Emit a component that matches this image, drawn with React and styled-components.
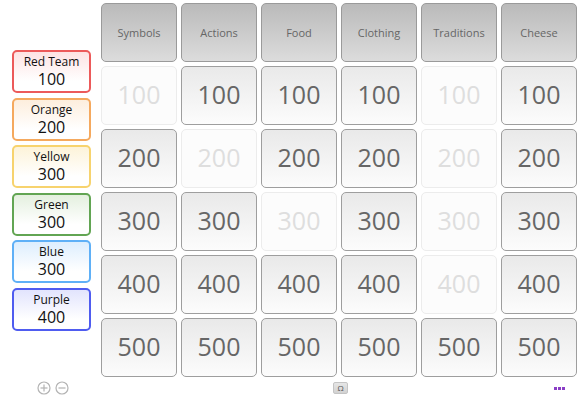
import React from 'react'
import styled, { createGlobalStyle } from 'styled-components'

const GlobalStyle = createGlobalStyle`
  html, body {
    margin: 0;
    padding: 0;
    background: #fff;
    font-family: 'Open Sans', 'DejaVu Sans', sans-serif;
  }
`

const teams = [
  { name: 'Red Team', score: 100, border: '#ec5a5a', tint: '#fde3e3' },
  { name: 'Orange', score: 200, border: '#f5a95e', tint: '#fdeedd' },
  { name: 'Yellow', score: 300, border: '#f7d36e', tint: '#fdf3d9' },
  { name: 'Green', score: 300, border: '#62a553', tint: '#e4f0df' },
  { name: 'Blue', score: 300, border: '#5fb0f7', tint: '#ddeefe' },
  { name: 'Purple', score: 400, border: '#4f5cf0', tint: '#e2e4fd' }
]

const categories = ['Symbols', 'Actions', 'Food', 'Clothing', 'Traditions', 'Cheese']

// used[row][col]
const used = [
  [true, false, false, false, true, false],
  [false, true, false, false, true, false],
  [false, false, true, false, true, false],
  [false, false, false, false, true, false],
  [false, false, false, false, false, false]
]

const App = () => {
  return (
    <>
      <GlobalStyle />
      <Page>
        <Main>
          <Sidebar>
            {teams.map(t => (
              <TeamBox key={t.name} border={t.border} tint={t.tint}>
                <TeamName>{t.name}</TeamName>
                <TeamScore>{t.score}</TeamScore>
              </TeamBox>
            ))}
          </Sidebar>
          <Board>
            {categories.map(c => (
              <Header key={c}>{c}</Header>
            ))}
            {used.map((row, r) =>
              row.map((u, c) => (
                <Cell key={r + '-' + c} used={u}>
                  {(r + 1) * 100}
                </Cell>
              ))
            )}
          </Board>
        </Main>
        <Footer>
          <Controls>
            <RoundIcon viewBox='0 0 14 14'>
              <circle cx='7' cy='7' r='6' />
              <line x1='7' y1='3.5' x2='7' y2='10.5' />
              <line x1='3.5' y1='7' x2='10.5' y2='7' />
            </RoundIcon>
            <RoundIcon viewBox='0 0 14 14'>
              <circle cx='7' cy='7' r='6' />
              <line x1='3.5' y1='7' x2='10.5' y2='7' />
            </RoundIcon>
          </Controls>
          <OmegaButton>Ω</OmegaButton>
          <Dots>
            <span />
            <span />
            <span />
          </Dots>
        </Footer>
      </Page>
    </>
  )
}

const Page = styled.div`
  width: 585px;
  height: 405px;
  display: flex;
  flex-direction: column;
`
const Main = styled.div`
  display: flex;
  padding-top: 3px;
`
const Sidebar = styled.div`
  width: 79px;
  padding: 47px 10px 0 12px;
  display: flex;
  flex-direction: column;
  gap: 4.5px;
`
const TeamBox = styled.div`
  box-sizing: border-box;
  height: 43px;
  border: 2px solid ${p => p.border};
  border-radius: 5px;
  background: linear-gradient(to bottom, ${p => p.tint}, #ffffff 75%);
  display: flex;
  flex-direction: column;
  align-items: center;
  justify-content: center;
  color: #111;
`
const TeamName = styled.div`
  font-size: 12px;
  line-height: 16px;
`
const TeamScore = styled.div`
  font-size: 16px;
  line-height: 19px;
`
const Board = styled.div`
  display: grid;
  grid-template-columns: repeat(6, 76px);
  grid-auto-rows: 59px;
  gap: 4px;
`
const Header = styled.div`
  box-sizing: border-box;
  border: 1.5px solid #9a9a9a;
  border-radius: 5px;
  background: linear-gradient(to bottom, #bababa, #dcdcdc);
  display: flex;
  align-items: center;
  justify-content: center;
  font-size: 11px;
  color: #666;
`
const Cell = styled.div`
  box-sizing: border-box;
  padding-bottom: 3px;
  border: 1.5px solid ${p => (p.used ? '#ececec' : '#9e9e9e')};
  border-radius: 5px;
  background: ${p =>
    p.used ? '#fcfcfc' : 'linear-gradient(to bottom, #e9e9e9, #fcfcfc)'};
  display: flex;
  align-items: center;
  justify-content: center;
  font-size: 25px;
  color: ${p => (p.used ? '#dedede' : '#666')};
`
const Footer = styled.div`
  display: flex;
  align-items: center;
  height: 20px;
  margin-top: 1px;
`
const Controls = styled.div`
  display: flex;
  gap: 4px;
  margin-left: 37px;
  width: 232px;
`
const RoundIcon = styled.svg`
  width: 14px;
  height: 14px;
  fill: none;
  stroke: #b3b3b3;
  stroke-width: 1.2;
`
const OmegaButton = styled.div`
  width: 13px;
  height: 10px;
  border: 1px solid #c4c4c4;
  border-radius: 2px;
  background: linear-gradient(to bottom, #e6e6e6, #d2d2d2);
  font-size: 8px;
  line-height: 10px;
  text-align: center;
  color: #555;
  margin-left: 64px;
`
const Dots = styled.div`
  display: flex;
  gap: 1px;
  margin-left: 206px;
  span {
    width: 3px;
    height: 3px;
    background: #8a3ec6;
  }
`

export default App
